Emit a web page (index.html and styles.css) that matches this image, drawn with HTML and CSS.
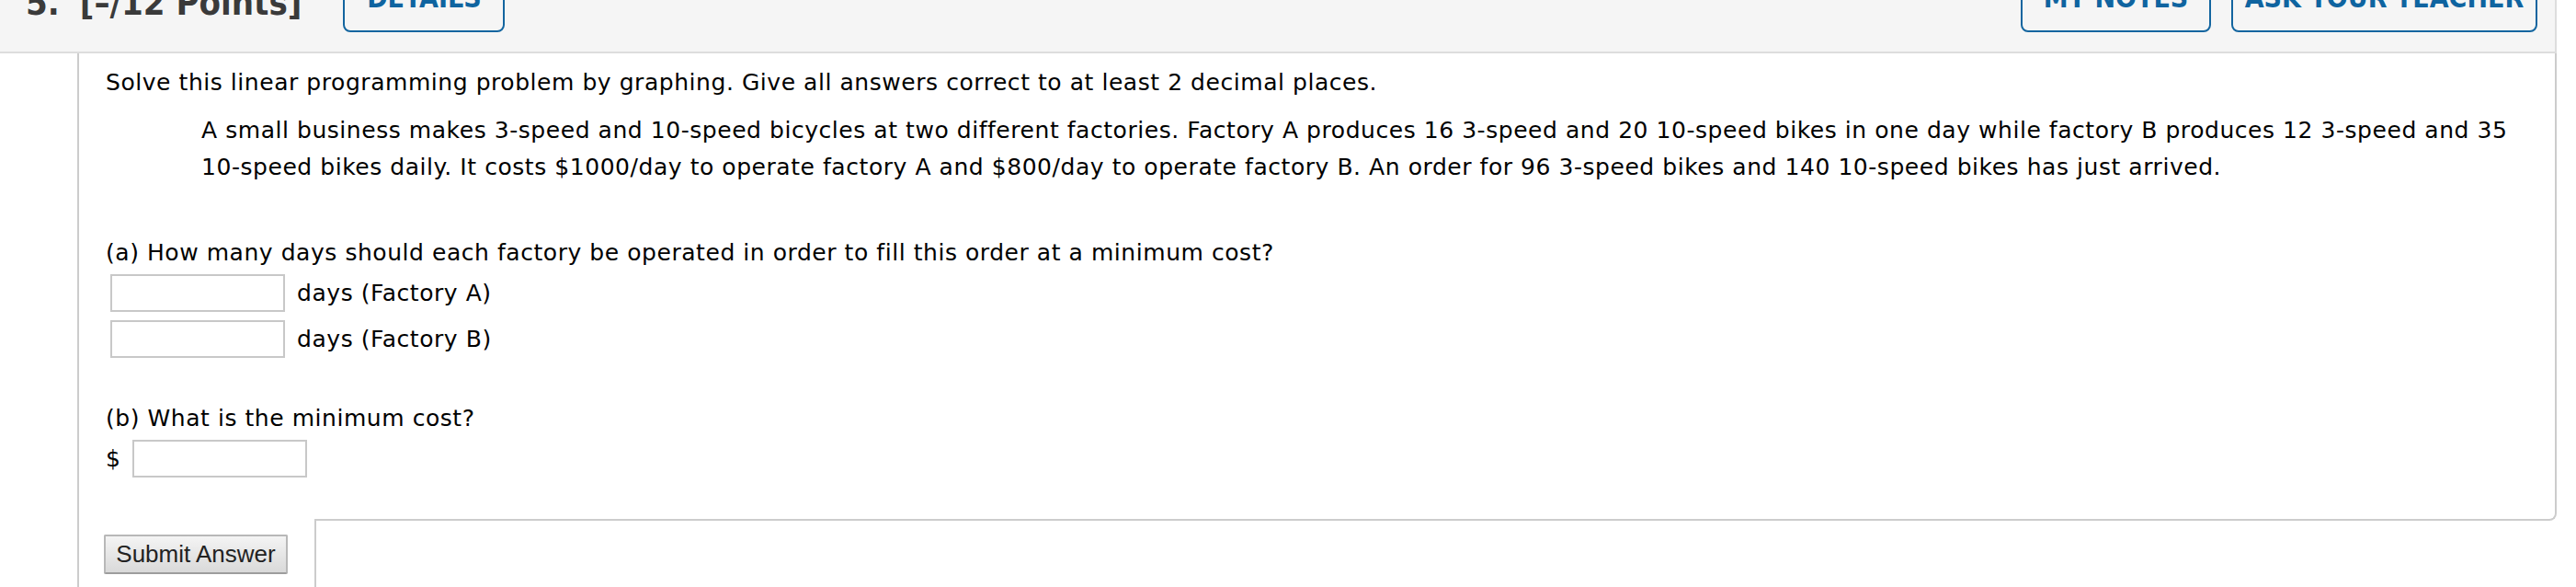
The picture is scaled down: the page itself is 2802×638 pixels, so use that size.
FILE: index.html
```html
<!DOCTYPE html>
<html lang="en">
<head>
<meta charset="utf-8">
<title>Question 5</title>
<link rel="stylesheet" href="styles.css">
</head>
<body>
<div class="header">
  <div class="title"><span class="qnum">5.</span><span class="points">[–/12 Points]</span></div>
  <button class="hbtn details" type="button">DETAILS</button>
  <button class="hbtn notes" type="button">MY NOTES</button>
  <button class="hbtn ask" type="button">ASK YOUR TEACHER</button>
</div>
<div class="question">
  <div class="panel">
    <p class="intro">Solve this linear programming problem by graphing. Give all answers correct to at least 2 decimal places.</p>
    <p class="problem">A small business makes 3-speed and 10-speed bicycles at two different factories. Factory A produces 16 3-speed and 20 10-speed bikes in one day while factory B produces 12 3-speed and 35 10-speed bikes daily. It costs $1000/day to operate factory A and $800/day to operate factory B. An order for 96 3-speed bikes and 140 10-speed bikes has just arrived.</p>
    <p class="part">(a) How many days should each factory be operated in order to fill this order at a minimum cost?</p>
    <div class="row"><input class="answer" type="text"><span class="unit">days (Factory A)</span></div>
    <div class="row row-b"><input class="answer" type="text"><span class="unit">days (Factory B)</span></div>
    <p class="part part-b">(b) What is the minimum cost?</p>
    <div class="row cost"><span class="dollar">$</span><input class="answer" type="text"></div>
  </div>
  <div class="footer">
    <div class="submit-area"><button class="submit" type="button">Submit Answer</button></div>
    <div class="extra"></div>
  </div>
</div>
</body>
</html>
```

FILE: styles.css
```css
body {
  margin: 0;
  background: #ffffff;
  font-family: "DejaVu Sans", Verdana, sans-serif;
  color: #000000;
}

.header {
  display: flex;
  align-items: flex-end;
  box-sizing: border-box;
  width: 2781px;
  height: 58px;
  padding: 0 19px 0 28px;
  background: #f5f5f5;
  border-bottom: 2px solid #dddddd;
  border-right: 2px solid #dddddd;
  overflow: hidden;
}

.title {
  font-family: "Liberation Sans Narrow", "DejaVu Sans Condensed", sans-serif;
  font-weight: bold;
  font-size: 38px;
  line-height: 38px;
  color: #3a3a3a;
  white-space: nowrap;
  margin-bottom: 34px;
}

.points {
  margin-left: 22px;
}

.hbtn {
  box-sizing: border-box;
  font-family: "Liberation Sans Narrow", "DejaVu Sans Condensed", sans-serif;
  font-weight: bold;
  font-size: 30px;
  line-height: 30px;
  color: #0f64a0;
  background: transparent;
  border: 2px solid #13659f;
  border-radius: 8px;
  padding: 20px 0;
  margin-bottom: 21px;
  text-align: center;
  white-space: nowrap;
}

.details {
  width: 176px;
  margin-left: 45px;
}

.notes {
  width: 207px;
  margin-left: auto;
}

.ask {
  width: 333px;
  margin-left: 22px;
}

.question {
  box-sizing: border-box;
  width: 2697px;
  margin-left: 84px;
  border-left: 2px solid #cccccc;
}

.panel {
  padding: 12px 0 45px 29px;
  border-right: 2px solid #cccccc;
  border-bottom: 2px solid #cccccc;
  border-bottom-right-radius: 8px;
  font-size: 25px;
  letter-spacing: 0.55px;
  line-height: 40px;
}

.panel p {
  margin: 0;
}

.panel .problem {
  margin: 12px 24px 0 104px;
}

.panel .part {
  margin-top: 53px;
}

.panel .part-b {
  margin-top: 46px;
}

.row {
  display: flex;
  align-items: center;
  height: 41px;
  margin-top: 3px;
  padding-left: 5px;
}

.row-b {
  margin-top: 9px;
}

.answer {
  box-sizing: border-box;
  width: 190px;
  height: 41px;
  margin: 0 13px 0 0;
  padding: 0;
  border: 2px solid #c8c8c8;
  background: #ffffff;
}

.cost {
  padding-left: 0;
}

.dollar {
  margin-right: 13px;
}

.footer {
  display: flex;
  height: 74px;
  margin-top: -2px;
}

.submit-area {
  width: 256px;
  background: #ffffff;
}

.submit {
  box-sizing: border-box;
  width: 200px;
  height: 43px;
  margin: 17px 0 0 27px;
  padding: 0;
  font-family: "Liberation Sans", Arial, sans-serif;
  font-size: 26px;
  letter-spacing: 0;
  color: #222222;
  background: linear-gradient(#f4f4f4, #d9d9d9);
  border: 2px solid #b8b8b8;
  border-bottom-color: #9d9d9d;
  border-radius: 2px;
}

.extra {
  flex: 1;
  border-left: 2px solid #cccccc;
}
```
